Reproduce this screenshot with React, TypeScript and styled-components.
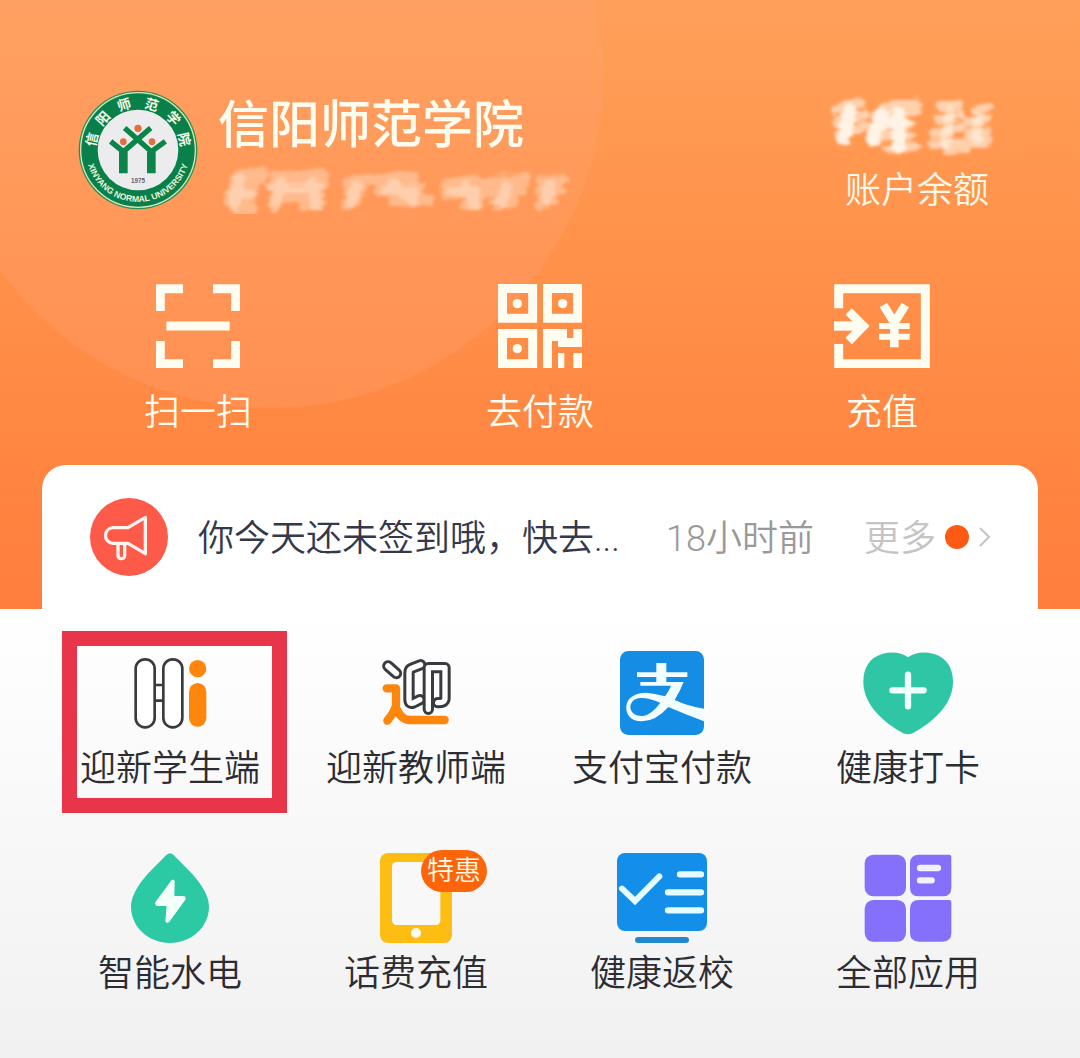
import React from "react";
import styled, { createGlobalStyle } from "styled-components";

const GlobalStyle = createGlobalStyle`
  *, *::before, *::after { box-sizing: border-box; }
  body {
    margin: 0;
    font-family: Roboto, "Noto Sans CJK SC", sans-serif;
    font-weight: 350;
    font-size: 36px;
    line-height: 50px;
    color: #2b2d33;
  }
  button {
    font: inherit;
    color: inherit;
    background: none;
    border: 0;
    padding: 0;
    cursor: pointer;
  }
`;

const Page = styled.main`
  min-height: 100vh;
  display: flex;
  flex-direction: column;
  background: #fff;
`;

const Header = styled.header`
  padding: 90px 42px 0;
  background:
    radial-gradient(circle at 270px 75px, rgba(255, 162, 116, 0.3) 332px, transparent 334px),
    linear-gradient(to bottom, #ffa05a 0, #ff944d 35%, #ff8641 75%, #ff7e3e 100%);
`;

const Profile = styled.div`
  display: flex;
  align-items: flex-start;
  gap: 20px;
  padding: 0 43px 0 36px;
`;

const SchoolInfo = styled.div`
  flex: 1;
  min-width: 0;
  padding-top: 3px;
`;

const SchoolName = styled.h1`
  margin: 0 0 5px;
  font-size: 51px;
  line-height: 66px;
  font-weight: 500;
  color: #fffdf0;
`;

const Balance = styled.div`
  display: flex;
  flex-direction: column;
  align-items: flex-end;
  color: #fff8e6;
`;

const BalanceLabel = styled.span`
  padding-right: 6px;
  margin-top: 9px;
`;

const Smudge = styled.svg`
  display: block;
`;

const Actions = styled.nav`
  display: grid;
  grid-template-columns: repeat(3, 1fr);
  margin: 68px -15px 27px;
`;

const Action = styled.button`
  display: flex;
  flex-direction: column;
  align-items: center;
  gap: 20px;
  color: #fffcf0;
`;

const Notice = styled.section`
  display: flex;
  align-items: center;
  padding: 33px 46px 33px 48px;
  background: #fff;
  border-radius: 24px 24px 0 0;
`;

const NoticeText = styled.p`
  flex: 1;
  min-width: 0;
  margin: 0 24px 0 30px;
  padding-top: 4px;
  overflow: hidden;
  white-space: nowrap;
  color: #33384a;
`;

const NoticeTime = styled.time`
  margin-right: 50px;
  padding-top: 4px;
  color: #999;
`;

const MoreButton = styled.button`
  display: flex;
  align-items: center;
  color: #c4c4c4;
`;

const MoreLabel = styled.span`
  padding-top: 4px;
`;

const UnreadDot = styled.span`
  width: 24px;
  height: 24px;
  margin: 0 9px;
  border-radius: 50%;
  background: #fd5a14;
`;

const AppGrid = styled.section`
  flex: 1;
  display: grid;
  grid-template-columns: repeat(4, 1fr);
  align-content: start;
  row-gap: 59px;
  padding: 39px 49px 59px 47px;
  background: linear-gradient(to bottom, #fff 0, #fafafa 35%, #f1f1f1 100%);
`;

const AppButton = styled.button`
  position: relative;
  display: flex;
  flex-direction: column;
  align-items: center;
  gap: 6px;
  white-space: nowrap;
`;

const IconBox = styled.span`
  position: relative;
  display: block;
  width: 90px;
  height: 90px;
  svg { display: block; }
`;

const Badge = styled.span`
  position: absolute;
  left: 50px;
  top: -3px;
  width: 66px;
  height: 42px;
  border-radius: 21px;
  background: #fd650a;
  color: #fff8e6;
  font-size: 27px;
  line-height: 42px;
  text-align: center;
`;

const Highlight = styled.span`
  position: absolute;
  top: -17px;
  right: 6px;
  bottom: -19px;
  left: 15px;
  border: 15px solid #e83549;
`;

const Emblem = () => {
  const seal = [
    { c: "信", a: -77 },
    { c: "阳", a: -48 },
    { c: "师", a: -17 },
    { c: "范", a: 17 },
    { c: "学", a: 48 },
    { c: "院", a: 77 },
  ];
  return (
    <svg width="120" height="120" viewBox="54 30 360 360" role="img" aria-label="校徽">
      <circle cx="234" cy="210" r="178" fill="#2a8f50" />
      <circle cx="234" cy="210" r="172" fill="none" stroke="#d6e6c0" strokeWidth="4" />
      <circle cx="234" cy="210" r="169" fill="#09804a" />
      <circle cx="234" cy="210" r="121" fill="#ececee" />
      <g fill="#f4fbe8" fontSize="41" fontWeight="700" fontFamily="'Noto Sans CJK SC', sans-serif" textAnchor="middle">
        {seal.map((s) => (
          <text key={s.c} x="234" y="83" transform={`rotate(${s.a} 234 210)`}>{s.c}</text>
        ))}
      </g>
      <path id="seal-arc" d="M78 210 A156 156 0 0 0 390 210" fill="none" />
      <text fill="#e8f4dc" fontSize="26" fontWeight="700" fontFamily="'Liberation Sans', sans-serif" textAnchor="middle">
        <textPath href="#seal-arc" startOffset="50%">XINYANG NORMAL UNIVERSITY</textPath>
      </text>
      <g fill="none" stroke="#0b8449" strokeWidth="16">
        <path strokeWidth="26" d="M190 280V215M274 280V215" />
        <path d="M152 184L190 215L272 144M316 184L274 215L194 144" />
      </g>
      <g fill="#e2703d">
        <circle cx="234" cy="145" r="11" />
        <circle cx="190" cy="185" r="10" />
        <circle cx="276" cy="185" r="10" />
      </g>
      <text x="234" y="308" fill="#60656a" fontSize="19" fontWeight="700" fontFamily="'Liberation Sans', sans-serif" textAnchor="middle">1975</text>
    </svg>
  );
};

const SmudgeFilter = ({ id }: { id: string }) => (
  <filter id={id} x="-10%" y="-20%" width="120%" height="140%">
    <feTurbulence type="fractalNoise" baseFrequency="0.01 0.12" numOctaves="2" seed="7" />
    <feDisplacementMap in="SourceGraphic" scale="30" xChannelSelector="R" yChannelSelector="A" />
    <feGaussianBlur stdDeviation="4" />
  </filter>
);

const HiddenNumber = () => (
  <Smudge width="354" height="50" viewBox="20 236 1062 150" aria-hidden="true">
    <SmudgeFilter id="smudge-number" />
    <g filter="url(#smudge-number)" fill="none" stroke="#ffd9bc" strokeLinecap="round">
      <g opacity="0.5" strokeWidth="34">
        <path d="M80 272L155 262M70 295L145 285M60 322L125 310M50 350L110 340M80 375L125 370" />
        <path d="M190 275L335 268M180 305L335 298M185 340L325 332M280 360L325 356" />
        <path d="M410 292L475 282M415 320L450 310M405 358L435 348M500 285L605 278M505 318L625 308M545 347L655 342" />
        <path d="M705 298L795 285M705 330L805 318M765 360L805 352M820 290L875 282M815 322L875 316M855 356L905 348M905 285L945 280M895 320L935 312" />
        <path d="M990 292L1055 280M990 322L1045 312M985 356L1025 342" />
      </g>
      <g strokeWidth="36" opacity="0.7">
        <path d="M85 280L65 360M210 295L190 360M305 295L315 360M435 305L420 350M545 300L605 345M765 308L790 355M885 305L872 352M1015 300L1005 340" />
        <path d="M60 325H120M180 308H335M520 315H615M715 315H795" strokeWidth="24" />
      </g>
    </g>
  </Smudge>
);

const HiddenBalance = () => (
  <Smudge width="168" height="67" viewBox="90 34 504 201" aria-hidden="true">
    <SmudgeFilter id="smudge-balance" />
    <g filter="url(#smudge-balance)" fill="none" stroke="#fff6ea" strokeLinecap="round">
      <g strokeWidth="28" opacity="0.6">
        <path d="M115 95L190 72M120 130L205 108M125 165L205 142" />
        <path d="M260 80L360 74M235 110L360 100M225 145L340 138M220 178L340 168M275 212L355 202" />
        <path d="M430 82L485 76M425 122L490 108M410 162L490 148M405 195L570 186M450 210L510 204M535 95L575 82M510 132L570 122M515 162L570 158" />
      </g>
      <g strokeWidth="42" opacity="0.95">
        <path d="M158 100L140 178M255 105L228 180M305 105L305 205" />
        <path d="M240 130H325" strokeWidth="30" />
        <path d="M460 100L445 195M545 118L540 178" opacity="0.6" strokeWidth="32" />
      </g>
    </g>
  </Smudge>
);

const ScanIcon = () => (
  <svg width="84" height="84" viewBox="78 42 252 252" fill="none" stroke="currentColor" strokeWidth="27">
    <path d="M91 123V56H159M249 56H317V123M317 213V281H249M159 281H91V213M109 168H299" />
  </svg>
);

const QrIcon = () => (
  <svg width="84" height="84" viewBox="1104 42 252 252" fill="currentColor">
    <g fill="none" stroke="currentColor" strokeWidth="27">
      <path d="M1117.500 55.500H1208V145H1117.500ZM1252.500 55.500H1343V145H1252.500ZM1117.500 190.500H1208V281H1117.500Z" />
    </g>
    <circle cx="1162" cy="101" r="14" />
    <circle cx="1298" cy="101" r="14" />
    <circle cx="1162" cy="236" r="14" />
    <path d="M1239 177H1311V204H1330V177H1357V231H1284V213H1266V295H1239ZM1284 249H1303V295H1284ZM1330 249H1357V295H1330Z" />
  </svg>
);

const RechargeIcon = () => (
  <svg width="96" height="84" viewBox="72 42 288 252" fill="none" stroke="currentColor" strokeWidth="27">
    <path d="M86 115V56H346V281H86V222" />
    <path d="M72 168H150" strokeWidth="28" />
    <path d="M116 124L160 168L116 213" strokeWidth="27" />
    <path d="M220 105L253 158L286 105M253 155V232" strokeWidth="26" />
    <path d="M207 168H299M207 200H299" strokeWidth="18" />
  </svg>
);

const MegaphoneIcon = () => (
  <svg width="78" height="78" viewBox="31 24 234 234" aria-hidden="true">
    <circle cx="148" cy="141" r="117" fill="#fd5a4a" />
    <g fill="none" stroke="#fff3ee" strokeWidth="10" strokeLinejoin="round">
      <path d="M197 82L145 113H100C70 116 70 157 100 160H145L197 191Z" />
      <path d="M115 161V197C115 209 135 209 135 197V161" />
    </g>
  </svg>
);

const ChevronIcon = () => (
  <svg width="14" height="24" viewBox="0 0 14 24" fill="none" stroke="currentColor" strokeWidth="2">
    <path d="M2 3L11 12L2 21" />
  </svg>
);

const HiIcon = () => (
  <svg width="90" height="90" viewBox="225 84 270 270">
    <g fill="#fff" stroke="#3a3b3e" strokeWidth="8">
      <rect x="257" y="118" width="57" height="204" rx="28" />
      <rect x="340" y="118" width="57" height="204" rx="28" />
      <path d="M314 195H340M314 242H340" />
    </g>
    <circle cx="443" cy="146" r="26" fill="#ff860c" />
    <rect x="417" y="189" width="52" height="131" rx="26" fill="#ff860c" />
  </svg>
);

const WelcomeIcon = () => {
  const left = "M1112 134L1087 144Q1077 147 1077 158V239Q1077 253 1090 249L1110 239";
  const right = "M1135 268V143H1185V235Q1185 249 1163 248";
  return (
    <svg width="90" height="90" viewBox="963 84 270 270" fill="none" strokeLinecap="round" strokeLinejoin="round">
      <path d="M1010 205H1038V255Q1034 275 1012 302M1038 262Q1052 300 1080 300H1184" stroke="#ff860c" strokeWidth="25" />
      <path d="M1014 138L1039 160" stroke="#3a3b3e" strokeWidth="35" />
      <path d="M1014 138L1039 160" stroke="#fff" strokeWidth="17" />
      <path d={left} stroke="#3a3b3e" strokeWidth="34" />
      <path d={left} stroke="#fff" strokeWidth="16" />
      <path d={right} stroke="#3a3b3e" strokeWidth="34" />
      <path d={right} stroke="#fff" strokeWidth="16" />
    </svg>
  );
};

const AlipayIcon = () => (
  <svg width="90" height="90" viewBox="171 24 270 270">
    <rect x="180" y="33" width="252" height="252" rx="25" fill="#148de5" />
    <path
      d="M289 69H319V97H382V111H319V126H371Q360 154 344 180Q385 199 432 206V244Q378 224 325 201Q286 245 244 244C210 243 197 222 199 198C202 170 230 158 258 158Q283 160 315 169Q327 153 333 137H241V126H289V111H231V97H289Z"
      fill="#f2fdff"
    />
    <path d="M301 188Q267 173 242 174C221 175 211 188 211 202C212 220 228 229 249 228Q276 223 301 188Z" fill="#148de5" />
  </svg>
);

const HeartIcon = () => (
  <svg width="90" height="90" viewBox="909 24 270 270">
    <path
      d="M1044 52C1064 37 1093 34 1122 42C1160 53 1180 84 1179 130C1176 198 1114 250 1058 280Q1044 286 1030 280C974 250 913 198 910 130C909 84 929 53 966 42C995 34 1024 37 1044 52Z"
      fill="#2ec6a4"
    />
    <path d="M1044 104V199M997 151H1091" stroke="#effff9" strokeWidth="19" strokeLinecap="round" />
  </svg>
);

const DropIcon = () => (
  <svg width="90" height="90" viewBox="105 39 270 270">
    <path
      d="M229 45Q240 35 251 45C282 78 312 102 335 138C350 162 357 181 357 202C355 266 301 309 240 309C179 309 125 266 123 202C123 181 130 162 145 138C168 102 198 78 229 45Z"
      fill="#2bcaa5"
    />
    <path
      d="M246 122L198 187Q196 194 202 196H232L228 243Q230 248 236 245L285 177Q286 171 280 170H251L252 124Q250 119 246 122Z"
      fill="#f3fff9"
      stroke="#f3fff9"
      strokeWidth="4"
      strokeLinejoin="round"
    />
  </svg>
);

const PhoneIcon = () => (
  <svg width="90" height="90" viewBox="843 39 270 270">
    <rect x="870" y="39" width="216" height="270" rx="24" fill="#fdbd13" />
    <rect x="906" y="66" width="145" height="189" rx="14" fill="#f8f8f8" />
    <circle cx="978" cy="279" r="15" fill="#fffaf0" />
  </svg>
);

const ReturnIcon = () => (
  <svg width="90" height="90" viewBox="111 39 270 270" fill="none" strokeLinecap="round" strokeLinejoin="round">
    <rect x="111" y="39" width="270" height="234" rx="24" fill="#148fe9" />
    <path d="M126 146L165 183L238 109" stroke="#e4fcff" strokeWidth="18" strokeLinejoin="miter" />
    <path d="M300 103H363M264 157H363M264 211H363" stroke="#e4fcff" strokeWidth="19" />
    <path d="M174 300H318" stroke="#2389cf" strokeWidth="18" />
  </svg>
);

const AllAppsIcon = () => (
  <svg width="90" height="90" viewBox="849 39 270 270" fill="#8470fb">
    <rect x="854" y="44" width="124" height="125" rx="26" />
    <path d="M1017 44H1108Q1114 44 1114 50V143Q1114 169 1088 169H1017Q990 169 990 143V70Q990 44 1017 44Z" />
    <rect x="854" y="180" width="124" height="125" rx="26" />
    <path d="M1017 180H1108Q1114 180 1114 186V279Q1114 305 1088 305H1017Q990 305 990 279V206Q990 180 1017 180Z" />
    <path d="M1020 84H1074M1020 121H1055" stroke="#f4f1ff" strokeWidth="19" strokeLinecap="round" />
  </svg>
);

const actions = [
  { label: "扫一扫", Icon: ScanIcon },
  { label: "去付款", Icon: QrIcon },
  { label: "充值", Icon: RechargeIcon },
];

const apps = [
  { label: "迎新学生端", Icon: HiIcon, highlighted: true },
  { label: "迎新教师端", Icon: WelcomeIcon },
  { label: "支付宝付款", Icon: AlipayIcon },
  { label: "健康打卡", Icon: HeartIcon },
  { label: "智能水电", Icon: DropIcon },
  { label: "话费充值", Icon: PhoneIcon, badge: "特惠" },
  { label: "健康返校", Icon: ReturnIcon },
  { label: "全部应用", Icon: AllAppsIcon },
];

export default function App() {
  return (
    <Page>
      <GlobalStyle />
      <Header>
        <Profile>
          <Emblem />
          <SchoolInfo>
            <SchoolName>信阳师范学院</SchoolName>
            <HiddenNumber />
          </SchoolInfo>
          <Balance>
            <HiddenBalance />
            <BalanceLabel>账户余额</BalanceLabel>
          </Balance>
        </Profile>
        <Actions>
          {actions.map(({ label, Icon }) => (
            <Action key={label} type="button">
              <Icon />
              <span>{label}</span>
            </Action>
          ))}
        </Actions>
        <Notice>
          <MegaphoneIcon />
          <NoticeText>你今天还未签到哦，快去...</NoticeText>
          <NoticeTime>18小时前</NoticeTime>
          <MoreButton type="button">
            <MoreLabel>更多</MoreLabel>
            <UnreadDot />
            <ChevronIcon />
          </MoreButton>
        </Notice>
      </Header>
      <AppGrid>
        {apps.map(({ label, Icon, badge, highlighted }) => (
          <AppButton key={label} type="button">
            <IconBox>
              <Icon />
              {badge && <Badge>{badge}</Badge>}
            </IconBox>
            <span>{label}</span>
            {highlighted && <Highlight />}
          </AppButton>
        ))}
      </AppGrid>
    </Page>
  );
}
